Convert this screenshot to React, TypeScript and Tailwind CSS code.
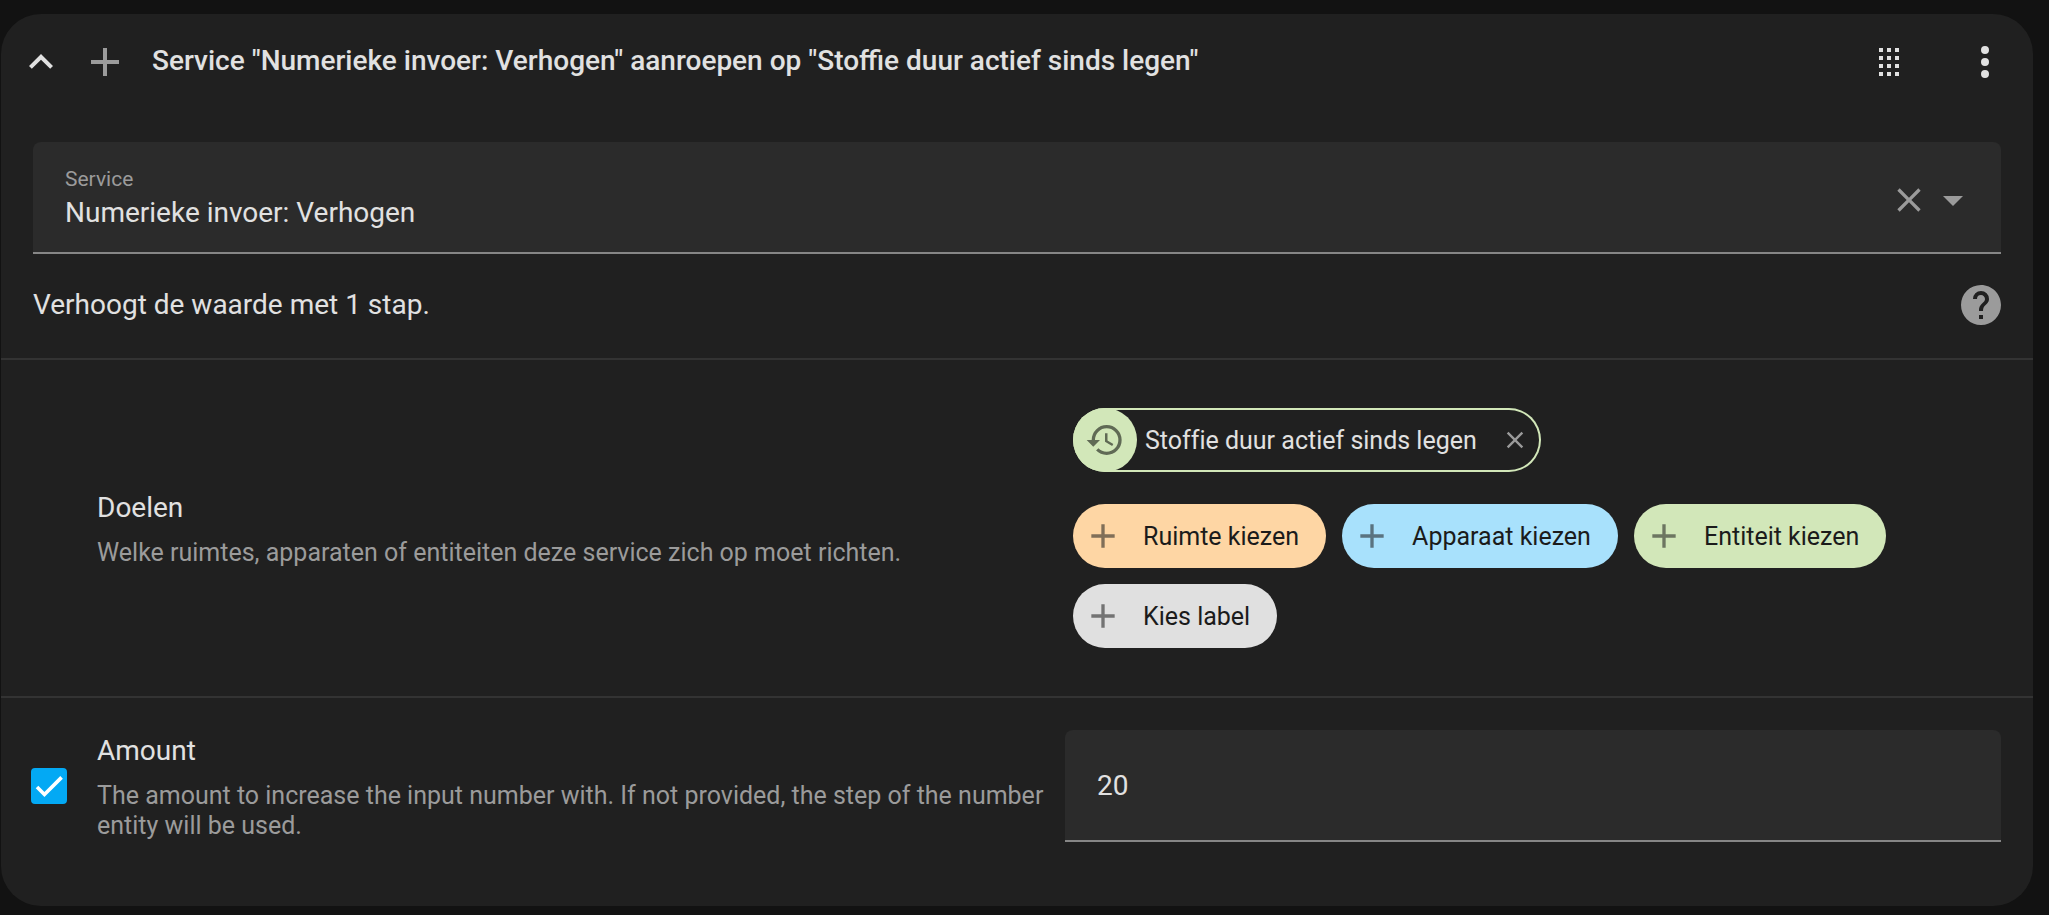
import { useState } from "react";
import type { ReactNode } from "react";

const paths = {
  chevronUp: "M7.41,15.41L12,10.83L16.59,15.41L18,14L12,8L6,14L7.41,15.41Z",
  plus: "M19,13H13V19H11V13H5V11H11V5H13V11H19V13Z",
  drag: "M7,19V17H9V19H7M11,19V17H13V19H11M15,19V17H17V19H15M7,15V13H9V15H7M11,15V13H13V15H11M15,15V13H17V15H15M7,11V9H9V11H7M11,11V9H13V11H11M15,11V9H17V11H15M7,7V5H9V7H7M11,7V5H13V7H11M15,7V5H17V7H15Z",
  dots: "M12,16A2,2 0 0,1 14,18A2,2 0 0,1 12,20A2,2 0 0,1 10,18A2,2 0 0,1 12,16M12,10A2,2 0 0,1 14,12A2,2 0 0,1 12,14A2,2 0 0,1 10,12A2,2 0 0,1 12,10M12,4A2,2 0 0,1 14,6A2,2 0 0,1 12,8A2,2 0 0,1 10,6A2,2 0 0,1 12,4Z",
  close: "M19,6.41L17.59,5L12,10.59L6.41,5L5,6.41L10.59,12L5,17.59L6.41,19L12,13.41L17.59,19L19,17.59L13.41,12L19,6.41Z",
  menuDown: "M7,10L12,15L17,10H7Z",
  help: "M15.07,11.25L14.17,12.17C13.45,12.89 13,13.5 13,15H11V14.5C11,13.39 11.45,12.39 12.17,11.67L13.41,10.41C13.78,10.05 14,9.55 14,9C14,7.89 13.1,7 12,7A2,2 0 0,0 10,9H8A4,4 0 0,1 12,5A4,4 0 0,1 16,9C16,9.88 15.64,10.67 15.07,11.25M13,19H11V17H13M12,2A10,10 0 0,0 2,12A10,10 0 0,0 12,22A10,10 0 0,0 22,12C22,6.47 17.5,2 12,2Z",
  history: "M13.5,8H12V13L16.28,15.54L17,14.33L13.5,12.25V8M13,3A9,9 0 0,0 4,12H1L4.96,16.03L9,12H6A7,7 0 0,1 13,5A7,7 0 0,1 20,12A7,7 0 0,1 13,19C11.07,19 9.32,18.21 8.06,16.94L6.64,18.36C8.27,20 10.5,21 13,21A9,9 0 0,0 22,12A9,9 0 0,0 13,3",
};

function Icon({ name, className = "size-12" }: { name: keyof typeof paths; className?: string }) {
  return (
    <svg viewBox="0 0 24 24" aria-hidden="true" fill="currentColor" className={`shrink-0 ${className}`}>
      <path d={paths[name]} />
    </svg>
  );
}

function AddChip({ color, children }: { color: string; children: ReactNode }) {
  return (
    <button
      type="button"
      className={`flex h-16 items-center gap-5 rounded-full pl-[10px] pr-[27px] text-[25px] leading-8 text-[#1b1b1b] ${color}`}
    >
      <Icon name="plus" className="size-10 opacity-55" />
      <span className="pt-0.5">{children}</span>
    </button>
  );
}

function SettingText({ title, text, htmlFor }: { title: string; text: string; htmlFor?: string }) {
  return (
    <div className="flex flex-col gap-[10px]">
      {htmlFor ? (
        <label htmlFor={htmlFor} className="text-[28px] leading-10">{title}</label>
      ) : (
        <h3 className="text-[28px] leading-10">{title}</h3>
      )}
      <p className="text-[25px] leading-[30px] text-[#9b9b9b]">{text}</p>
    </div>
  );
}

export default function App() {
  const [service, setService] = useState("Numerieke invoer: Verhogen");
  const [enabled, setEnabled] = useState(true);
  const [amount, setAmount] = useState("20");

  return (
    <div className="min-h-screen bg-[#121212] pt-[14px] pr-4 pb-2 pl-px font-[Roboto,sans-serif] text-[#e1e1e1]">
      <section className="rounded-[40px] bg-[#202020] pb-8">
        <header className="flex h-24 items-center pr-6 pl-4">
          <button type="button" aria-label="Inklappen" className="flex">
            <Icon name="chevronUp" />
          </button>
          <Icon name="plus" className="ml-4 size-12 text-[#9b9b9b]" />
          <h2 className="ml-[23px] flex-1 pb-0.5 text-[28px] leading-10 font-medium">
            Service "Numerieke invoer: Verhogen" aanroepen op "Stoffie duur actief sinds legen"
          </h2>
          <button type="button" aria-label="Verplaatsen" className="flex">
            <Icon name="drag" />
          </button>
          <button type="button" aria-label="Meer opties" className="ml-12 flex">
            <Icon name="dots" />
          </button>
        </header>

        <div className="px-8 pt-8">
          <div className="flex h-28 items-center rounded-t-lg border-b-2 border-[#868686] bg-[#2b2b2b] pt-1.5 pr-6 pl-8">
            <div className="flex min-w-0 flex-1 flex-col pb-0.5">
              <label htmlFor="service" className="text-[21px] leading-7 text-[#9b9b9b]">Service</label>
              <input
                id="service"
                type="text"
                value={service}
                onChange={(e) => setService(e.target.value)}
                className="w-full bg-transparent text-[28px] leading-10 outline-none"
              />
            </div>
            <button type="button" aria-label="Wissen" onClick={() => setService("")} className="flex text-[#9b9b9b]">
              <Icon name="close" className="size-10" />
            </button>
            <button type="button" aria-label="Openen" className="flex text-[#9b9b9b]">
              <Icon name="menuDown" />
            </button>
          </div>
        </div>

        <div className="flex h-[104px] items-center justify-between pr-7 pb-0.5 pl-8">
          <p className="text-[28px] leading-10">Verhoogt de waarde met 1 stap.</p>
          <a href="#help" aria-label="Help" className="flex text-[#9b9b9b]">
            <Icon name="help" />
          </a>
        </div>

        <div className="flex items-center border-t-2 border-[#333333] px-8 py-12">
          <div className="flex-1 pr-4 pl-16">
            <SettingText
              title="Doelen"
              text="Welke ruimtes, apparaten of entiteiten deze service zich op moet richten."
            />
          </div>
          <div className="flex w-[calc(50%-48px)] flex-col items-start gap-8 px-2">
            <div className="flex h-16 items-center rounded-full text-[25px] leading-8 inset-ring-2 inset-ring-[#d2e7b9]">
              <span className="flex size-16 items-center justify-center rounded-full bg-[#d2e7b9] text-[#606a55]">
                <Icon name="history" className="size-10" />
              </span>
              <span className="pt-0.5 pl-2 [font-variant-ligatures:none]">Stoffie duur actief sinds legen</span>
              <button type="button" aria-label="Verwijderen" className="mr-3 ml-6 flex text-[#9b9b9b]">
                <Icon name="close" className="size-7" />
              </button>
            </div>
            <div className="flex flex-wrap gap-4">
              <AddChip color="bg-[#fed6a4]">Ruimte kiezen</AddChip>
              <AddChip color="bg-[#a8e1fc]">Apparaat kiezen</AddChip>
              <AddChip color="bg-[#d2e7b9]">Entiteit kiezen</AddChip>
              <AddChip color="bg-[#e0e0e0]">Kies label</AddChip>
            </div>
          </div>
        </div>

        <div className="flex items-center border-t-2 border-[#333333] px-8 py-8">
          <div className="grid w-16 shrink-0 items-center">
            <input
              id="amount-enabled"
              type="checkbox"
              checked={enabled}
              onChange={(e) => setEnabled(e.target.checked)}
              className="peer col-start-1 row-start-1 -ml-0.5 size-9 appearance-none rounded-[4px] border-2 border-[#9b9b9b] checked:border-[#03a9f4] checked:bg-[#03a9f4]"
            />
            <svg
              viewBox="0 0 24 24"
              aria-hidden="true"
              className="pointer-events-none invisible col-start-1 row-start-1 -ml-0.5 size-9 p-1 peer-checked:visible"
            >
              <path d="M1.73,12.91 8.1,19.28 22.79,4.59" fill="none" stroke="#fff" strokeWidth="3.12" />
            </svg>
          </div>
          <div className="flex-1 pr-4">
            <SettingText
              htmlFor="amount-enabled"
              title="Amount"
              text="The amount to increase the input number with. If not provided, the step of the number entity will be used."
            />
          </div>
          <input
            type="text"
            inputMode="numeric"
            aria-label="Amount"
            value={amount}
            onChange={(e) => setAmount(e.target.value)}
            className="h-28 w-[calc(50%-48px)] rounded-t-lg border-b-2 border-[#868686] bg-[#2b2b2b] px-8 text-[28px] leading-10 outline-none"
          />
        </div>
      </section>
    </div>
  );
}
